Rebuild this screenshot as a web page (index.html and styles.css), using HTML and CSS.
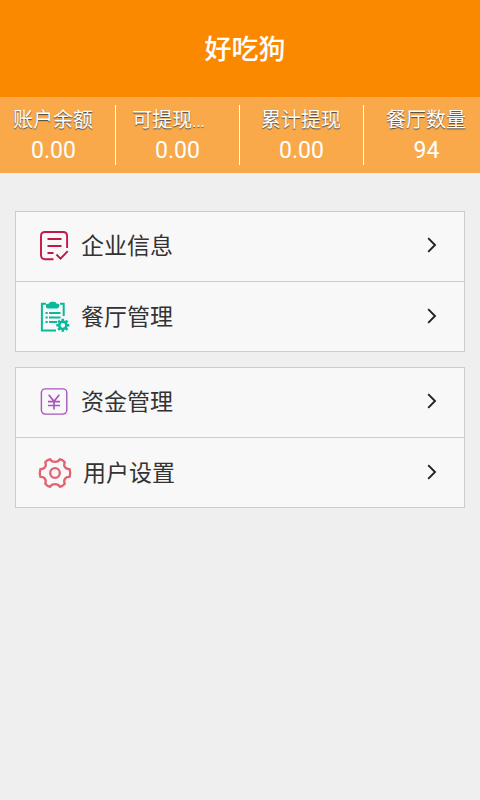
FILE: index.html
```html
<!DOCTYPE html>
<html lang="zh-CN">
<head>
<meta charset="utf-8">
<title>好吃狗</title>
<link rel="stylesheet" href="styles.css">
</head>
<body>
<header class="header"><h1>好吃狗</h1></header>
<section class="stats">
  <div class="stat"><span class="label">账户余额</span><span class="value">0.00</span></div>
  <div class="stat"><span class="label clipped">可提现<span class="dots">...</span></span><span class="value">0.00</span></div>
  <div class="stat"><span class="label">累计提现</span><span class="value">0.00</span></div>
  <div class="stat last"><span class="label">餐厅数量</span><span class="value">94</span></div>
</section>
<main class="menu">
  <nav class="group">
    <a class="row">
      <svg class="icon" viewBox="0 0 32 32" fill="none" stroke="#c21747" stroke-width="1.9"><path d="M29.1 19V7Q29.1 3 25 3H7Q3 3 3 7V26Q3 30.2 7 30.2H15.5M9.5 10h14M9.5 17h14M9.5 24h6M18.5 25.5l4 4.2 7.2-7.5"/></svg>
      <span class="name">企业信息</span>
      <svg class="arrow" viewBox="0 0 10 16"><path d="M1.2 1.2 8 8 1.2 14.8"/></svg>
    </a>
    <a class="row">
      <svg class="icon" viewBox="0 0 32 32" fill="none" stroke="#0bb99a" stroke-width="2"><path d="M8 3.7H3.9V30.6H18M22 3.7h3.7V16M7.5 13h2.2M11 13h11.5M7.5 17.5h2.2M11 17.5h11.5M7.5 22h2.2M11 22h8"/><path d="M8 7.5V5Q8 3.5 11 3.5Q11.5 1.7 13.5 1.7H16Q18 1.7 18.5 3.5Q21.5 3.5 21.5 5.2Q21 8.5 18.5 8.5H11Q8.8 8.5 8 7.5Z" fill="#0bb99a" stroke="none"/><circle cx="24.8" cy="25.3" r="3.6" stroke-width="2.5"/><path d="M24.8 18.8v2.5M24.8 29.3v2.5M18.3 25.3h2.5M28.8 25.3h2.5M20.2 20.7l1.8 1.8M27.6 28.1l1.8 1.8M29.4 20.7l-1.8 1.8M22 28.1l-1.8 1.8" stroke-width="2.6"/></svg>
      <span class="name">餐厅管理</span>
      <svg class="arrow" viewBox="0 0 10 16"><path d="M1.2 1.2 8 8 1.2 14.8"/></svg>
    </a>
  </nav>
  <nav class="group">
    <a class="row">
      <svg class="icon" viewBox="0 0 32 32" fill="none" stroke="#a956bd" stroke-width="1.4"><rect x="3.4" y="3.9" width="25.4" height="25.2" rx="4"/><path d="M10.7 9.7 16 16.3 21.3 9.7M16 16.3V24.5M10 16.6H22M10 20.5H22" stroke-width="1.7"/></svg>
      <span class="name">资金管理</span>
      <svg class="arrow" viewBox="0 0 10 16"><path d="M1.2 1.2 8 8 1.2 14.8"/></svg>
    </a>
    <a class="row wide">
      <svg class="icon" viewBox="0 0 34 32" fill="none" stroke="#e06472" stroke-width="2.3" stroke-linejoin="round"><path d="M12.2 2.2C14 5.7 20 5.7 21.8 2.2Q24.8 2.8 26.8 5.2C25 9 27.5 12.5 31.7 12.2Q32.7 16 31.7 19.8C27.5 19.5 25 23 26.8 26.8Q24.8 29.2 21.8 29.8C20 26.3 14 26.3 12.2 29.8Q9.2 29.2 7.2 26.8C9 23 6.5 19.5 2.3 19.8Q1.3 16 2.3 12.2C6.5 12.5 9 9 7.2 5.2Q9.2 2.8 12.2 2.2Z"/><circle cx="17" cy="16" r="4.8"/></svg>
      <span class="name">用户设置</span>
      <svg class="arrow" viewBox="0 0 10 16"><path d="M1.2 1.2 8 8 1.2 14.8"/></svg>
    </a>
  </nav>
</main>
</body>
</html>
```
FILE: styles.css
```css
* { box-sizing: border-box; }
body {
  margin: 0;
  min-height: 800px;
  background: #efefef;
  font-family: Roboto, "Noto Sans CJK SC", sans-serif;
  overflow-x: hidden;
}
.header {
  height: 97px;
  background: #fb8900;
  display: flex;
  align-items: center;
  justify-content: center;
}
h1 {
  margin: 0;
  padding: 2px 0 0 10px;
  color: #fff;
  font-size: 27px;
  line-height: 40px;
  font-weight: 500;
}
.stats {
  height: 76px;
  padding: 8px 0;
  background: #f9a94a;
  display: flex;
  justify-content: center;
  overflow: hidden;
}
.stat {
  flex: 0 0 124px;
  height: 60px;
  border-right: 1px solid #fff;
  display: flex;
  flex-direction: column;
  align-items: center;
  color: #fff;
}
.last {
  border-right: 0;
  padding-left: 1px;
}
.label {
  height: 29px;
  padding: 1px 1px 0 0;
  font-size: 20px;
  line-height: 28px;
  white-space: nowrap;
  text-shadow: 0 1px 1px #444;
}
.clipped { padding-right: 18px; }
.dots {
  font-size: 16px;
  line-height: 1;
}
.value {
  font-size: 23px;
  line-height: 33px;
}
.menu {
  padding: 38px 15px 0;
  display: flex;
  flex-direction: column;
  gap: 15px;
}
.group {
  border: 1px solid #ccc;
  background: #f8f8f8;
}
.row {
  height: 69px;
  padding: 0 27px 4px 22px;
  display: flex;
  align-items: center;
}
.row + .row {
  height: 70px;
  padding-bottom: 2px;
  border-top: 1px solid #ccc;
}
.icon {
  width: 32px;
  height: 32px;
  margin-top: 1px;
  flex: none;
}
.name {
  flex: 1;
  margin-left: 11px;
  padding-bottom: 2px;
  font-size: 23px;
  line-height: 34px;
  font-weight: 400;
  font-family: "Noto Sans CJK SC", sans-serif;
  color: #333;
}
.wide .icon {
  width: 34px;
  margin-top: 2px;
}
.arrow {
  width: 10px;
  height: 16px;
  fill: none;
  stroke: #222;
  stroke-width: 1.9;
}
```
